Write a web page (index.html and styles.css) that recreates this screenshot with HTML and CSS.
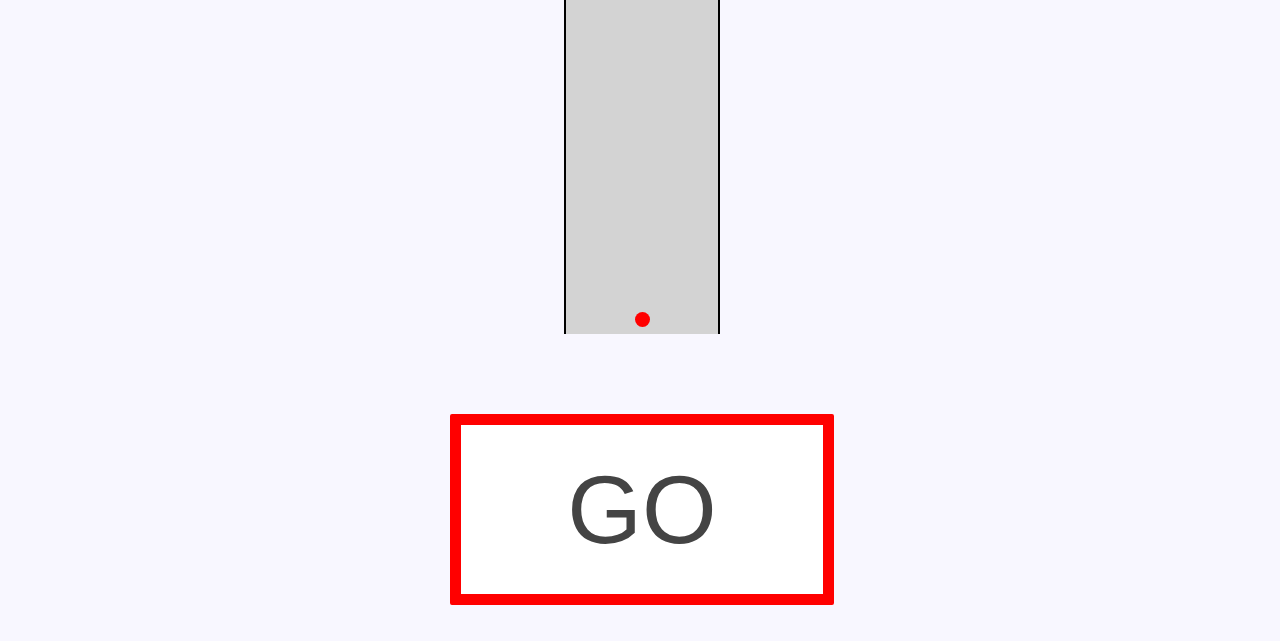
FILE: index.html
```html
<!DOCTYPE html>
<html>
<head>
<meta charset="utf-8">
<link rel="stylesheet" href="styles.css">
</head>
<body>
<div class="page">
  <div class="tube">
    <div class="dot"></div>
  </div>
  <button class="go">GO</button>
</div>
</body>
</html>
```

FILE: styles.css
```css
html, body {
  margin: 0;
  padding: 0;
  background: #f8f7ff;
  height: 100%;
  overflow: hidden;
}
.page {
  display: flex;
  flex-direction: column;
  align-items: center;
  padding-left: 4px;
}
.tube {
  box-sizing: border-box;
  width: 156px;
  height: 334px;
  background: #d3d3d3;
  border-left: 2px solid #000;
  border-right: 2px solid #000;
  display: flex;
  justify-content: center;
  align-items: flex-end;
  padding-bottom: 7px;
}
.dot {
  width: 15px;
  height: 15px;
  border-radius: 50%;
  background: #ff0000;
}
.go {
  box-sizing: border-box;
  margin-top: 80px;
  width: 384px;
  height: 191px;
  background: #fff;
  border: 11px solid #ff0000;
  border-radius: 2px;
  font-family: "Liberation Sans", Arial, sans-serif;
  font-size: 96px;
  color: #444;
  padding: 0;
  display: flex;
  align-items: center;
  justify-content: center;
}
```
